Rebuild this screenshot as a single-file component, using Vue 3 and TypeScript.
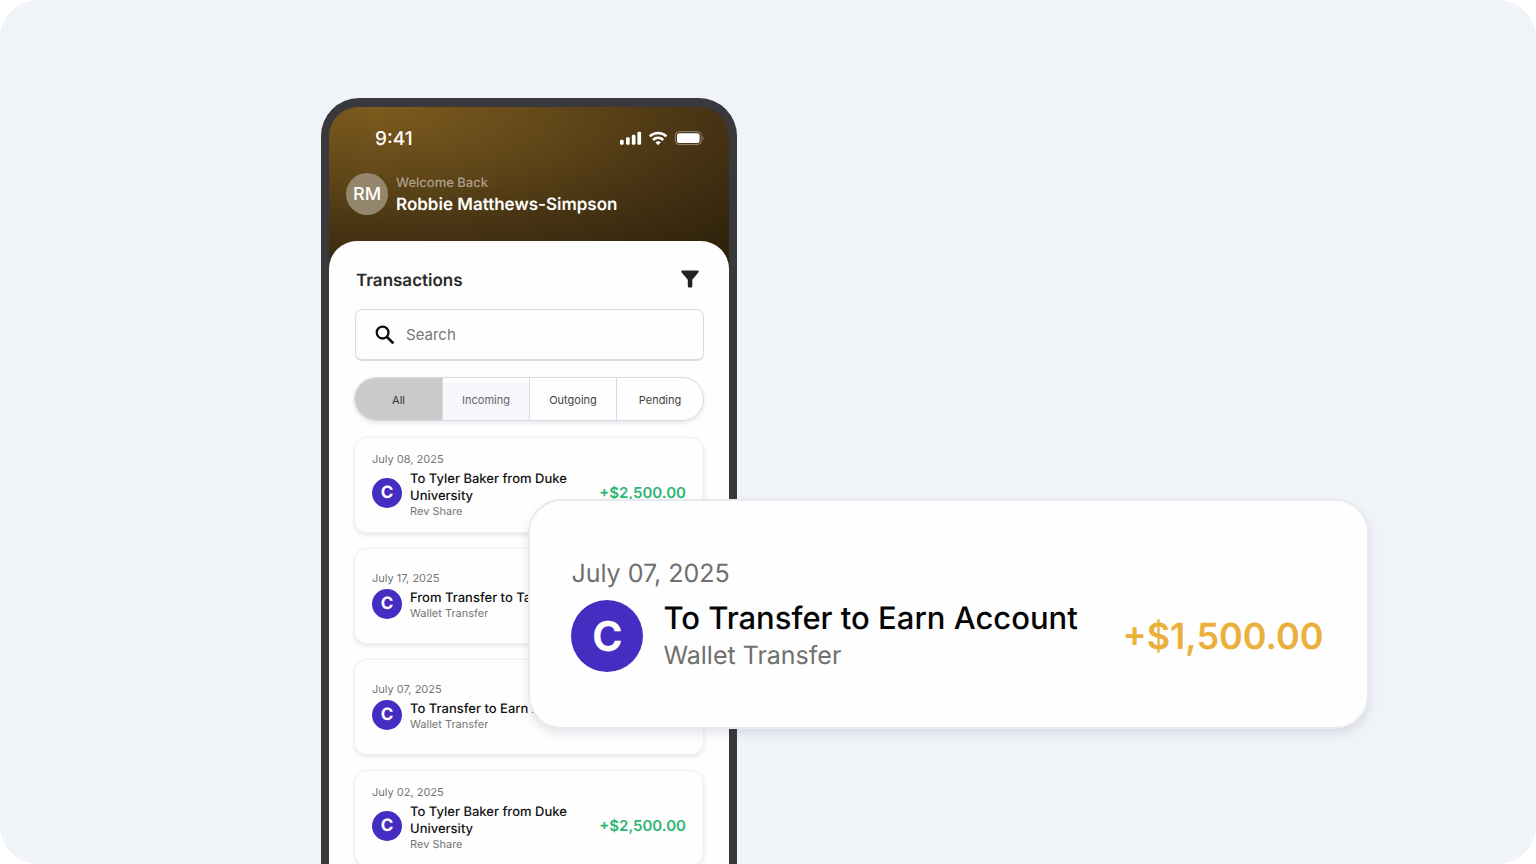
<script setup lang="ts">
import { ref } from 'vue'

interface Transaction {
  date: string
  title: string
  kind: string
  amount?: string
  clip?: boolean
}

const tabs = ['All', 'Incoming', 'Outgoing', 'Pending']
const activeTab = ref('All')
const query = ref('')

const transactions: Transaction[] = [
  { date: 'July 08, 2025', title: 'To Tyler Baker from Duke University', kind: 'Rev Share', amount: '+$2,500.00' },
  { date: 'July 17, 2025', title: 'From Transfer to Ta…', kind: 'Wallet Transfer', clip: true },
  { date: 'July 07, 2025', title: 'To Transfer to Earn Account', kind: 'Wallet Transfer' },
  { date: 'July 02, 2025', title: 'To Tyler Baker from Duke University', kind: 'Rev Share', amount: '+$2,500.00' },
]
</script>

<template>
  <main class="scene">
    <section class="phone">
      <header class="top">
        <div class="status">
          <span class="clock">9:41</span>
          <svg class="signals" viewBox="0 0 84 16" aria-hidden="true">
            <g fill="#fff">
              <rect x="0" y="9.8" width="3.7" height="5" rx="1.2" />
              <rect x="6" y="7.3" width="3.7" height="7.5" rx="1.2" />
              <rect x="11.8" y="4.8" width="3.7" height="10" rx="1.2" />
              <rect x="17.4" y="1.8" width="3.7" height="13" rx="1.2" />
            </g>
            <g fill="none" stroke="#fff" stroke-width="2.6">
              <path d="M29.8 6.4C34.6 1.9 41.6 1.9 46.4 6.4" />
              <path d="M32.9 9.9C36 7.2 40.2 7.2 43.3 9.9" />
            </g>
            <path d="M35.4 12.3C37 11 39.2 11 40.8 12.3L38.1 15.2Z" fill="#fff" />
            <rect x="55.3" y="1.6" width="26" height="13" rx="4" fill="none" stroke="#fff" stroke-opacity=".4" />
            <rect x="57" y="3.2" width="22.6" height="9.8" rx="2.6" fill="#fff" />
            <path d="M82.6 6.2C84 6.8 84 9.4 82.6 10Z" fill="#fff" fill-opacity=".45" />
          </svg>
        </div>
        <div class="profile">
          <span class="initials">RM</span>
          <div class="greeting">
            <p class="welcome">Welcome Back</p>
            <p class="name">Robbie Matthews-Simpson</p>
          </div>
        </div>
      </header>

      <div class="sheet">
        <div class="heading">
          <h1>Transactions</h1>
          <button class="filter" type="button" aria-label="Filter">
            <svg viewBox="0 0 18 18"><path d="M1.2.6H16.8C17.7.6 18 1.5 17.5 2.2L11.3 9.8V16C11.3 17.1 10.5 17.6 9.6 17.6H8.4C7.3 17.6 6.8 16.9 6.8 16V9.8L.5 2.2C0 1.5.3.6 1.2.6Z" fill="#222" /></svg>
          </button>
        </div>

        <label class="search">
          <svg viewBox="0 0 20 20" aria-hidden="true">
            <circle cx="7.6" cy="7.6" r="5.9" fill="none" stroke="#0b0b0b" stroke-width="2.3" />
            <path d="M12 12L18.4 18.4" stroke="#0b0b0b" stroke-width="2.7" />
          </svg>
          <input v-model="query" type="text" placeholder="Search" aria-label="Search" />
        </label>

        <div class="tabs">
          <button
            v-for="tab in tabs"
            :key="tab"
            type="button"
            :class="{ active: tab === activeTab, soft: tab === 'Incoming' }"
            @click="activeTab = tab"
          >{{ tab }}</button>
        </div>

        <ul class="list">
          <li v-for="item in transactions" :key="item.date" class="card">
            <p class="date">{{ item.date }}</p>
            <div class="row">
              <span class="logo">C</span>
              <div class="info">
                <p class="title" :class="{ clip: item.clip }">{{ item.title }}</p>
                <p class="kind">{{ item.kind }}</p>
              </div>
              <span v-if="item.amount" class="amount">{{ item.amount }}</span>
            </div>
          </li>
        </ul>
      </div>
    </section>

    <article class="callout">
      <p class="date">July 07, 2025</p>
      <div class="row">
        <span class="logo">C</span>
        <div class="info">
          <p class="title">To Transfer to Earn Account</p>
          <p class="kind">Wallet Transfer</p>
        </div>
        <span class="amount">+$1,500.00</span>
      </div>
    </article>
  </main>
</template>

<style>
body {
  margin: 0;
  background: #fff;
}
</style>

<style scoped>
* {
  box-sizing: border-box;
}
p,
h1,
ul {
  margin: 0;
  padding: 0;
}
button,
input {
  font: inherit;
  border: 0;
  background: none;
  padding: 0;
}
.scene {
  position: relative;
  height: 100vh;
  overflow: hidden;
  padding: 98px 0 0 20.9%;
  border-radius: 38px;
  background: #f0f3f8;
  font-family: Inter, "Liberation Sans", sans-serif;
  text-rendering: geometricPrecision;
}
.phone {
  width: 416px;
  overflow: hidden;
  border: solid #39383d;
  border-width: 9px 8px 0;
  border-radius: 38px 38px 0 0;
  background: radial-gradient(ellipse 500px 185px at 12% 0, #7d5b1d 0%, #634819 35%, #493514 65%, #38290f 88%, #2c1f0b 110%);
}
.top {
  height: 134px;
  padding: 19px 25px 0 17px;
  color: #fff;
}
.status {
  display: flex;
  align-items: center;
  justify-content: space-between;
  height: 24px;
  padding-left: 29px;
}
.clock {
  font-size: 19px;
  font-weight: 500;
}
.signals {
  width: 84px;
  height: 16px;
}
.profile {
  display: flex;
  align-items: center;
  gap: 8px;
  margin-top: 21px;
}
.initials {
  display: grid;
  place-items: center;
  width: 42px;
  height: 42px;
  border-radius: 50%;
  background: #94866c;
  font-size: 18px;
  font-weight: 500;
}
.greeting {
  padding-top: 2px;
}
.welcome {
  color: #aca08a;
  font-size: 13px;
  font-weight: 500;
  line-height: 20px;
}
.name {
  font-size: 17px;
  font-weight: 600;
  line-height: 24px;
}
.sheet {
  padding: 26px 25px 0;
  border-radius: 28px 28px 0 0;
  background: #fefefe;
}
.heading {
  display: flex;
  align-items: center;
  justify-content: space-between;
  height: 26px;
  padding: 0 5px 0 2px;
}
h1 {
  padding-top: 1px;
  color: #2a2a2a;
  font-size: 17px;
  font-weight: 600;
}
.filter {
  width: 18px;
  height: 18px;
  margin-bottom: 2px;
}
.filter svg {
  display: block;
}
.search {
  display: flex;
  align-items: center;
  gap: 11px;
  height: 52px;
  margin: 16px 0 16px 1px;
  padding-left: 19px;
  border: 1px solid #d6dde7;
  border-bottom-width: 2px;
  border-radius: 7px;
}
.search svg {
  width: 20px;
  height: 20px;
}
.search input {
  flex: 1;
  min-width: 0;
  outline: 0;
  color: #222;
  font-size: 15px;
}
.search input::placeholder {
  color: #777;
  opacity: 1;
}
.tabs {
  display: grid;
  grid-template-columns: repeat(4, 1fr);
  height: 44px;
  overflow: hidden;
  border: 1px solid #d6dbe5;
  border-radius: 22px;
  box-shadow: 0 2px 4px rgba(60, 60, 100, 0.12);
}
.tabs button {
  padding-top: 1px;
  border-left: 1px solid #d6dde7;
  color: #444;
  font-size: 11px;
}
.tabs button:first-child {
  border-left: 0;
}
.tabs .soft {
  background: linear-gradient(#fefefe 5px, #f6f7fa 5px);
  color: #666;
}
.tabs .active {
  background: #cacaca;
  color: #333;
}
.list {
  display: grid;
  gap: 15px;
  margin-top: 16px;
  list-style: none;
}
.card {
  display: flex;
  flex-direction: column;
  justify-content: center;
  min-height: 96px;
  padding: 0 17px 3px;
  border: 1px solid #f0f0f4;
  border-radius: 13px;
  box-shadow: 0 2px 4px rgba(50, 50, 93, 0.12);
}
.row {
  display: flex;
  align-items: center;
  gap: 8px;
}
.info {
  flex: 1;
  padding-top: 3px;
}
.date,
.kind {
  color: #757575;
  font-size: 11px;
}
.date {
  line-height: 18px;
}
.kind {
  line-height: 13px;
}
.title {
  color: #111;
  font-size: 13px;
  font-weight: 500;
  line-height: 17px;
}
.clip {
  white-space: nowrap;
}
.logo {
  display: grid;
  place-items: center;
  flex: none;
  width: 30px;
  height: 30px;
  border-radius: 50%;
  background: #462dc2;
  color: #fff;
  font-size: 17px;
  font-weight: 700;
}
.amount {
  color: #2bb673;
  font-size: 15px;
  font-weight: 600;
}
.callout {
  position: absolute;
  top: 499px;
  left: 34.4%;
  width: 54.7%;
  padding: 51px 43px 53px 41px;
  border: 2px solid #e9eaef;
  border-radius: 34px;
  background: #fefefe;
  box-shadow: 0 5px 10px rgba(50, 50, 93, 0.12);
}
.callout .row {
  gap: 20px;
}
.callout .date,
.callout .kind {
  color: #707070;
  font-size: 25px;
}
.callout .date {
  line-height: 45px;
}
.callout .kind {
  line-height: 36px;
}
.callout .title {
  color: #050505;
  font-size: 31px;
  line-height: 38px;
}
.callout .logo {
  width: 72px;
  height: 72px;
  font-size: 41px;
}
.callout .amount {
  color: #ebb03c;
  font-size: 36px;
}
</style>
